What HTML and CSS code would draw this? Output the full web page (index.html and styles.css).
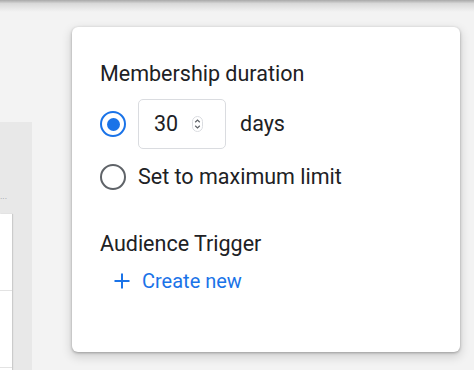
FILE: index.html
```html
<!DOCTYPE html>
<html lang="en">
<head>
  <meta charset="UTF-8" />
  <title>Membership duration</title>
  <link rel="stylesheet" href="styles.css">
</head>
<body>
  <div class="topbar"></div>

  <div class="page">
    <div class="sidenav">
      <div class="sidenav-dots">...</div>
      <div class="sidenav-list">
        <div class="sidenav-item"></div>
        <div class="sidenav-item"></div>
      </div>
    </div>

    <div class="card">
      <div class="label">Membership duration</div>

      <div class="option first">
        <span class="radio checked"></span>
        <div class="number-box">
          <span class="number-value">30</span>
          <span class="spinner">
            <svg width="11" height="16" viewBox="0 0 11 16">
              <rect x="0.5" y="0.5" width="10" height="15" rx="5" fill="none" stroke="#dadce0"/>
              <path d="M3.2 6.2 L5.5 4 L7.8 6.2" fill="none" stroke="#5f6368" stroke-width="1.2"/>
              <path d="M3.2 9.8 L5.5 12 L7.8 9.8" fill="none" stroke="#5f6368" stroke-width="1.2"/>
            </svg>
          </span>
        </div>
        <span class="option-text">days</span>
      </div>

      <div class="option second">
        <span class="radio"></span>
        <span class="option-text">Set to maximum limit</span>
      </div>

      <div class="label trigger">Audience Trigger</div>

      <div class="create-new">
        <svg width="16" height="16" viewBox="0 0 16 16">
          <path d="M8 0.5 V15.5 M0.5 8 H15.5" stroke="#1a73e8" stroke-width="2"/>
        </svg>
        <span>Create new</span>
      </div>
    </div>
  </div>
</body>
</html>
```

FILE: styles.css
```css
body {
  margin: 0;
  width: 474px;
  height: 370px;
  overflow: hidden;
  background: #f3f3f3;
  font-family: Roboto, "Liberation Sans", sans-serif;
  color: #202124;
}

.topbar {
  height: 12px;
  background: linear-gradient(#a8a8a8, #d9d9d9 30%, #f3f3f3);
}

.page {
  display: flex;
  align-items: flex-start;
}

.sidenav {
  width: 32px;
  height: 248px;
  margin-top: 110px;
  background: #e8e8e8;
}

.sidenav-dots {
  height: 92px;
  font-size: 9px;
  line-height: 9px;
  color: #9aa0a6;
  padding-top: 70px;
  box-sizing: border-box;
}

.sidenav-list {
  width: 12px;
  background: #fff;
  height: 156px;
  box-shadow: 1px 0 1px rgba(0, 0, 0, 0.12);
}

.sidenav-item {
  height: 76px;
  border-bottom: 1px solid #e3e3e3;
}

.card {
  width: 388px;
  height: 325px;
  margin-top: 15px;
  margin-left: 40px;
  padding: 33px 28px 0;
  box-sizing: border-box;
  background: #fff;
  border-radius: 6px;
  box-shadow: 0 1px 3px rgba(0, 0, 0, 0.3), 0 4px 10px 2px rgba(0, 0, 0, 0.12);
}

.label {
  font-size: 21.5px;
  line-height: 28px;
}

.option {
  display: flex;
  align-items: center;
  font-size: 21.5px;
  line-height: 28px;
}

.option.first {
  margin-top: 11px;
}

.option.second {
  margin-top: 14px;
}

.radio {
  width: 26px;
  height: 26px;
  box-sizing: border-box;
  border: 2.5px solid #5f6368;
  border-radius: 50%;
  margin-right: 12px;
  display: flex;
  align-items: center;
  justify-content: center;
}

.radio.checked {
  border-color: #1a73e8;
}

.radio.checked::after {
  content: "";
  width: 13px;
  height: 13px;
  border-radius: 50%;
  background: #1a73e8;
}

.number-box {
  width: 88px;
  height: 50px;
  box-sizing: border-box;
  border: 1px solid #dadce0;
  border-radius: 5px;
  display: flex;
  align-items: center;
  padding-left: 15px;
  margin-right: 14px;
}

.number-value {
  width: 38px;
}

.spinner {
  display: flex;
}

.trigger {
  margin-top: 39px;
}

.create-new {
  display: flex;
  align-items: center;
  gap: 12px;
  margin-top: 10px;
  padding-left: 14px;
  font-size: 20px;
  line-height: 26px;
  color: #1a73e8;
}
```
